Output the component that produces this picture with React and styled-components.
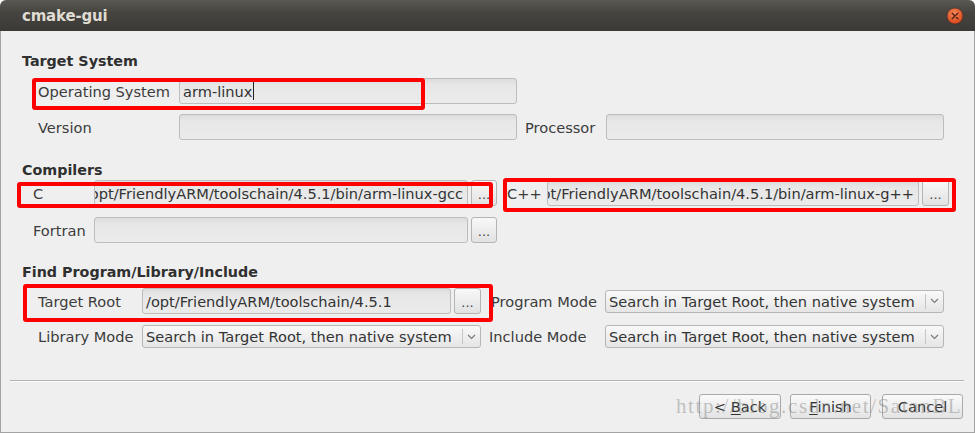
import React from 'react'
import styled, { createGlobalStyle } from 'styled-components'

const GlobalStyle = createGlobalStyle`
  html, body {
    margin: 0;
    padding: 0;
    background: #ffffff;
  }
`

const Window = styled.div`
  position: relative;
  width: 975px;
  height: 433px;
  display: flex;
  flex-direction: column;
  font-family: "DejaVu Sans", "Liberation Sans", sans-serif;
  font-size: 14.6px;
  color: #3c3c3c;
`

const TitleBar = styled.div`
  height: 31px;
  flex-shrink: 0;
  box-sizing: border-box;
  border-radius: 6px 6px 0 0;
  background: linear-gradient(#5a5953, #45443f 40%, #3b3a36);
  display: flex;
  align-items: center;
  justify-content: space-between;
  padding: 0 11px 0 22px;
`

const Title = styled.span`
  color: #dfdbd2;
  font-weight: bold;
  font-size: 15px;
  letter-spacing: -0.2px;
`

const Body = styled.div`
  flex: 1;
  box-sizing: border-box;
  background: #efefef;
  border: 1px solid #a3a3a3;
  border-top: none;
  padding: 22px 29px 0 21px;
  display: flex;
  flex-direction: column;
`

const Heading = styled.div`
  font-weight: bold;
  font-size: 14.3px;
  line-height: 16px;
  color: #303030;
  margin-top: ${p => p.$mt}px;
`

const Row = styled.div`
  display: flex;
  align-items: center;
  height: ${p => p.$h || 26}px;
  margin-top: ${p => p.$mt}px;
`

const Label = styled.div`
  width: ${p => p.$w}px;
  padding-left: ${p => p.$pl || 0}px;
  box-sizing: border-box;
  white-space: nowrap;
  overflow: hidden;
  flex-shrink: 0;
`

const Field = styled.div`
  width: ${p => p.$w}px;
  height: 26px;
  flex-shrink: 0;
  box-sizing: border-box;
  border: 1px solid #bdbdbd;
  border-radius: 3px;
  background: linear-gradient(#dcdcdc, #e7e7e7 25%, #ebebeb);
  padding: 0 4px 0 3px;
  display: flex;
  align-items: center;
  justify-content: ${p => (p.$end ? 'flex-end' : 'flex-start')};
  overflow: hidden;
  white-space: nowrap;
  color: #333;
`

const Cursor = styled.span`
  display: inline-block;
  width: 1px;
  height: 18px;
  background: #222;
  margin-left: 1px;
`

const Browse = styled.div`
  width: ${p => p.$w || 26}px;
  height: 26px;
  margin-left: 3px;
  flex-shrink: 0;
  box-sizing: border-box;
  border: 1px solid #b4b4b4;
  border-radius: 3px;
  background: linear-gradient(#f8f8f8, #e2e2e2);
  display: flex;
  align-items: center;
  justify-content: center;
  padding-top: 3px;
  font-size: 13px;
  color: #444;
`

const Combo = styled.div`
  width: ${p => p.$w}px;
  height: 23px;
  flex-shrink: 0;
  box-sizing: border-box;
  border: 1px solid #b6b6b6;
  border-radius: 3px;
  background: linear-gradient(#f9f9f9, #e5e5e5);
  display: flex;
  align-items: center;
  color: #333;
`

const ComboText = styled.div`
  flex: 1;
  padding-left: 3px;
  white-space: nowrap;
  overflow: hidden;
`

const ComboArrow = styled.div`
  width: 17px;
  height: 15px;
  flex-shrink: 0;
  border-left: 1px solid #c4c4c4;
  display: flex;
  align-items: center;
  justify-content: center;
`

const Separator = styled.div`
  height: 1px;
  background: #b2b2b2;
  border-bottom: 1px solid #fbfbfb;
  margin: 32px -19px 0 -12px;
`

const ButtonBar = styled.div`
  display: flex;
  justify-content: flex-end;
  margin: 12px -18px 0 0;
`

const Button = styled.div`
  width: ${p => p.$w}px;
  height: 25px;
  margin-left: ${p => p.$ml || 0}px;
  box-sizing: border-box;
  border: 1px solid #a9a9a9;
  border-radius: 3px;
  background: linear-gradient(#fafafa, #e3e3e3);
  display: flex;
  align-items: center;
  justify-content: center;
  white-space: pre;
  color: #333;
  u {
    text-decoration-thickness: 1px;
    text-underline-offset: 2px;
  }
`

const RedBox = styled.div`
  position: absolute;
  left: ${p => p.$x}px;
  top: ${p => p.$y}px;
  width: ${p => p.$w}px;
  height: ${p => p.$h}px;
  box-sizing: border-box;
  border: 4px solid #ff0000;
  border-radius: 3px;
  pointer-events: none;
`

const Watermark = styled.div`
  position: absolute;
  left: 676px;
  top: 394px;
  width: 287px;
  overflow: hidden;
  white-space: nowrap;
  font-family: "Liberation Serif", serif;
  font-size: 21px;
  letter-spacing: 1.6px;
  color: rgba(130, 130, 130, 0.45);
  pointer-events: none;
`

const CloseIcon = () => (
  <svg width="18" height="18" viewBox="0 0 18 18">
    <defs>
      <radialGradient id="cg" cx="45%" cy="35%" r="65%">
        <stop offset="0%" stopColor="#f88a5a" />
        <stop offset="100%" stopColor="#d4461c" />
      </radialGradient>
    </defs>
    <circle cx="9" cy="9" r="8" fill="url(#cg)" stroke="#3a2a22" strokeWidth="0.6" />
    <path d="M6.2 6.2 L11.8 11.8 M11.8 6.2 L6.2 11.8" stroke="#5a2210" strokeWidth="1.4" strokeLinecap="round" />
  </svg>
)

const Chevron = () => (
  <svg width="9" height="6" viewBox="0 0 9 6">
    <path d="M1 1 L4.5 4.5 L8 1" fill="none" stroke="#7a7a7a" strokeWidth="1.2" />
  </svg>
)

const searchMode = 'Search in Target Root, then native system'

function App() {
  return (
    <Window>
      <GlobalStyle />
      <TitleBar>
        <Title>cmake-gui</Title>
        <CloseIcon />
      </TitleBar>
      <Body>
        <Heading $mt={0}>Target System</Heading>
        <Row $mt={9}>
          <Label $w={157} $pl={16}>Operating System</Label>
          <Field $w={338}>arm-linux<Cursor /></Field>
        </Row>
        <Row $mt={10}>
          <Label $w={157} $pl={16}>Version</Label>
          <Field $w={338} />
          <Label $w={89} $pl={8}>Processor</Label>
          <Field $w={338} />
        </Row>

        <Heading $mt={22}>Compilers</Heading>
        <Row $mt={2}>
          <Label $w={72} $pl={11}>C</Label>
          <Field $w={374} $end>/opt/FriendlyARM/toolschain/4.5.1/bin/arm-linux-gcc</Field>
          <Browse>...</Browse>
          <Label $w={50} $pl={10}>C++</Label>
          <Field $w={372} $end>/opt/FriendlyARM/toolschain/4.5.1/bin/arm-linux-g++</Field>
          <Browse $w={27}>...</Browse>
        </Row>
        <Row $mt={11}>
          <Label $w={72} $pl={11}>Fortran</Label>
          <Field $w={374} />
          <Browse>...</Browse>
        </Row>

        <Heading $mt={21}>Find Program/Library/Include</Heading>
        <Row $mt={8}>
          <Label $w={120} $pl={16}>Target Root</Label>
          <Field $w={309}>/opt/FriendlyARM/toolschain/4.5.1</Field>
          <Browse $w={27}>...</Browse>
          <Label $w={124} $pl={10}>Program Mode</Label>
          <Combo $w={339}>
            <ComboText>{searchMode}</ComboText>
            <ComboArrow><Chevron /></ComboArrow>
          </Combo>
        </Row>
        <Row $mt={11} $h={23}>
          <Label $w={120} $pl={16}>Library Mode</Label>
          <Combo $w={339}>
            <ComboText>{searchMode}</ComboText>
            <ComboArrow><Chevron /></ComboArrow>
          </Combo>
          <Label $w={124} $pl={8}>Include Mode</Label>
          <Combo $w={339}>
            <ComboText>{searchMode}</ComboText>
            <ComboArrow><Chevron /></ComboArrow>
          </Combo>
        </Row>

        <Separator />
        <ButtonBar>
          <Button $w={82}>{'< '}<u>B</u>ack</Button>
          <Button $w={81} $ml={9}><u>F</u>inish</Button>
          <Button $w={81} $ml={11}>Cancel</Button>
        </ButtonBar>
      </Body>

      <RedBox $x={32} $y={78} $w={393} $h={32} />
      <RedBox $x={17} $y={182} $w={476} $h={26} />
      <RedBox $x={503} $y={178} $w={453} $h={34} />
      <RedBox $x={23} $y={284} $w={470} $h={38} />
      <Watermark>http://blog.csdn.net/SatanBL</Watermark>
    </Window>
  )
}

export default App
